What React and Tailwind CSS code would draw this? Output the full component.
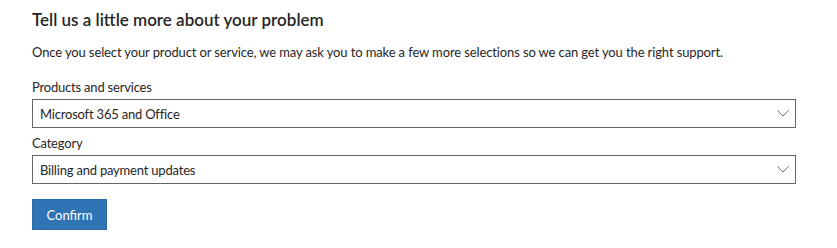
import React from 'react'

function Chevron() {
  return (
    <svg width="12" height="7" viewBox="0 0 12 7" fill="none" className="shrink-0">
      <path d="M0.5 0.5 L6 6 L11.5 0.5" stroke="#6b7380" strokeWidth="1" />
    </svg>
  )
}

function SelectBox({ value }) {
  return (
    <div className="flex items-center justify-between h-[29px] border border-[#666666] bg-white pl-[7px] pr-[6px] text-[13px] leading-[20px] tracking-[-0.2px] text-[#262626]">
      <span>{value}</span>
      <Chevron />
    </div>
  )
}

export default function App() {
  return (
    <div className="w-[837px] h-[248px] bg-white px-[32px] pt-[8px] text-[#262626] font-['Lato',sans-serif]">
      <h2 className="text-[17px] font-semibold leading-[24px]">Tell us a little more about your problem</h2>
      <p className="mt-[10px] text-[13px] leading-[20px] tracking-[-0.12px] whitespace-nowrap">
        Once you select your product or service, we may ask you to make a few more selections so we can get you the right support.
      </p>

      <div className="mt-[15px] w-[764px]">
        <label className="block text-[13px] leading-[20px] tracking-[-0.2px] mb-[2px]">Products and services</label>
        <SelectBox value="Microsoft 365 and Office" />
        <label className="block text-[13px] leading-[20px] tracking-[-0.2px] mt-[5px] mb-[2px]">Category</label>
        <SelectBox value="Billing and payment updates" />
      </div>

      <button className="mt-[15px] h-[31px] w-[75px] bg-[#2f74b5] border border-[#2a68a6] text-white text-[13px] leading-[20px]">
        Confirm
      </button>
    </div>
  )
}
